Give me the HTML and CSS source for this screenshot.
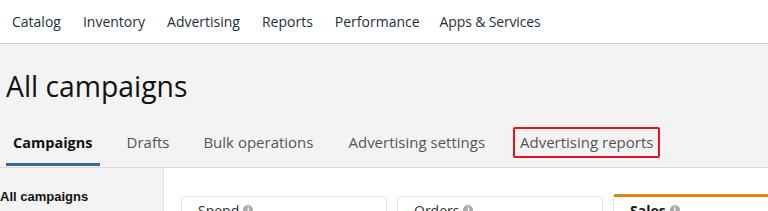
FILE: index.html
```html
<!DOCTYPE html>
<html>
<head>
<meta charset="utf-8">
<link rel="stylesheet" href="styles.css">
</head>
<body>
<nav class="topnav">
  <a class="nav-item">Catalog</a>
  <a class="nav-item">Inventory</a>
  <a class="nav-item">Advertising</a>
  <a class="nav-item">Reports</a>
  <a class="nav-item">Performance</a>
  <a class="nav-item">Apps &amp; Services</a>
</nav>
<main class="page">
  <h1 class="title">All campaigns</h1>
  <div class="tabs">
    <div class="tab active">Campaigns</div>
    <div class="tab tight">Drafts</div>
    <div class="tab">Bulk operations</div>
    <div class="tab">Advertising settings</div>
    <div class="tab highlighted">Advertising reports</div>
  </div>
  <div class="body">
    <aside class="sidebar">All campaigns</aside>
    <section class="content">
      <div class="cards">
        <div class="card"><span class="card-label">Spend <span class="info">i</span></span><span class="chev"></span></div>
        <div class="card"><span class="card-label">Orders <span class="info">i</span></span><span class="chev"></span></div>
        <div class="card selected"><span class="card-label">Sales <span class="info">i</span></span></div>
      </div>
    </section>
  </div>
</main>
</body>
</html>
```
FILE: styles.css
```css
* { box-sizing: border-box; }
html, body { margin: 0; padding: 0; }
body {
  width: 768px;
  height: 211px;
  overflow: hidden;
  font-family: "Open Sans", "Noto Sans", sans-serif;
  background: #f3f3f3;
  color: #232323;
}
.topnav {
  height: 44px;
  background: #fff;
  border-bottom: 1px solid #cfcfcf;
  display: flex;
  align-items: center;
  padding-left: 12px;
  gap: 22px;
  font-size: 14px;
}
.nav-item { color: #232f3e; }
.nav-item:last-child { margin-left: -2px; letter-spacing: -0.15px; }
.page { background: #f3f3f3; }
.title {
  margin: 0;
  padding: 24px 0 0 6px;
  font-size: 28.3px;
  font-weight: 400;
  line-height: 36px;
  color: #111;
}
.tabs {
  display: flex;
  align-items: flex-start;
  height: 48px;
  margin-top: 16px;
  padding-left: 6px;
  border-bottom: 1px solid #dcdcdc;
}
.tab {
  position: relative;
  margin-top: 7px;
  padding: 0 7px;
  margin-right: 21px;
  font-size: 15px;
  line-height: 31px;
  height: 31px;
  color: #555;
}
.tab.tight { margin-right: 20px; }
.tab.active {
  font-weight: 700;
  font-size: 14.5px;
  color: #111;
  margin-right: 20px;
}
.tab.active::after {
  content: "";
  position: absolute;
  left: 0; right: 0; top: 36px;
  height: 3px;
  background: #3a6795;
}
.tab.highlighted {
  border: 2px solid #e0131f;
  border-radius: 2px;
  line-height: 27px;
  padding: 0 5px;
}
.body {
  display: flex;
  height: 60px;
}
.sidebar {
  width: 163px;
  flex: none;
  font-family: "Liberation Sans", Arial, sans-serif;
  font-weight: 700;
  font-size: 13px;
  color: #111;
  padding-top: 21px;
}
.content {
  flex: 1;
  background: #fff;
  border-left: 1px solid #e3e3e3;
  padding: 28px 0 0 17px;
}
.cards {
  display: flex;
  gap: 10px;
}
.card {
  flex: none;
  width: 206px;
  height: 40px;
  background: #fff;
  border: 1px solid #e2e2e2;
  border-radius: 3px;
  display: flex;
  justify-content: space-between;
  padding: 4px 12px 0 16px;
  font-size: 14px;
  color: #333;
}
.card.selected {
  width: 170px;
  margin-top: -2px;
  border-top: 3px solid #e3850f;
  border-right: none;
  padding-top: 4px;
  font-weight: 700;
  color: #111;
}
.card-label { display: inline-flex; align-items: center; gap: 4px; height: 18px; }
.info {
  display: inline-block;
  width: 10px; height: 10px;
  border-radius: 50%;
  background: #aaa;
  color: #fff;
  font-size: 8px;
  line-height: 10px;
  text-align: center;
  font-weight: 700;
}
.chev {
  width: 7px; height: 7px;
  border-right: 1px solid #999;
  border-bottom: 1px solid #999;
  transform: rotate(45deg);
  margin-top: 8px;
}
```
